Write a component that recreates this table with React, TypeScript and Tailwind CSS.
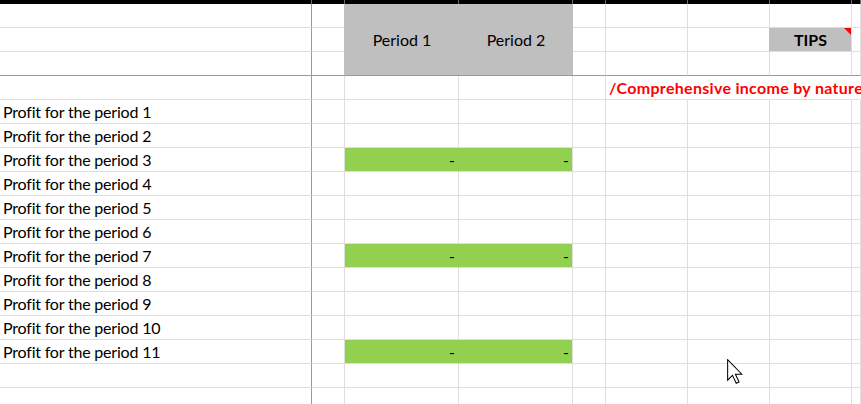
const ROWS = 17;
const COLS = 9;
const GREEN_ROWS = [6, 10, 14];

// grid line colours
// light: #dedede, freeze pane: #9a9a9a

function Cell({ r, c }: { r: number; c: number }) {
  const green = GREEN_ROWS.includes(r) && (c === 2 || c === 3);
  const tips = r === 1 && c === 7;

  const cls = ['relative flex h-full min-w-0 items-center border-b border-r leading-[19px]'];

  if (c === 0) cls.push('border-r-[#9a9a9a]');
  else if (c === 1 && r <= 2) cls.push('border-r-[#bfbfbf]');
  else if (c === 6 && r === 1) cls.push('border-r-[#bfbfbf]');
  else if (r === 3 && c >= 5) cls.push('border-r-transparent');
  else if (green && c === 2) cls.push('border-r-[#92d050]');
  else cls.push('border-r-[#dedede]');

  if (r === 2) cls.push('border-b-[#9a9a9a]');
  else cls.push('border-b-[#dedede]');

  if (green) cls.push('bg-[#92d050] justify-end pr-[3px]');
  if (tips) cls.push('bg-[#bfbfbf] justify-center font-bold');

  let content: React.ReactNode = null;
  if (c === 0 && r >= 4 && r <= 14) {
    content = (
      <span className="whitespace-nowrap pl-[3px] tracking-[-0.2px]">Profit for the period {r - 3}</span>
    );
  } else if (c === 5 && r === 3) {
    content = (
      <span className="whitespace-nowrap pl-[3px] font-bold tracking-[0.3px] text-[#ff0000]">
        /Comprehensive income by nature
      </span>
    );
  } else if (green) {
    content = '-';
  } else if (tips) {
    content = (
      <>
        TIPS
        <span className="absolute right-0 top-0 h-0 w-0 border-l-[7px] border-t-[7px] border-l-transparent border-t-[#ff0000]" />
      </>
    );
  }

  return <div className={cls.join(' ')}>{content}</div>;
}

function Cursor() {
  return (
    <svg
      className="absolute left-[727px] top-[359px]"
      width="16"
      height="25"
      viewBox="0 0 12.5 19.5"
    >
      <path
        d="M0.5 0.5 L0.5 16.5 L4.3 12.7 L7.2 18.9 L9.4 17.9 L6.6 11.9 L11.6 11.9 Z"
        fill="white"
        stroke="black"
        strokeWidth="0.8"
      />
    </svg>
  );
}

export default function App() {
  const cells: React.ReactNode[] = [];
  for (let r = 0; r < ROWS; r++) {
    for (let c = 0; c < COLS; c++) {
      if (r <= 2 && (c === 2 || c === 3)) continue;
      cells.push(<Cell key={`${r}-${c}`} r={r} c={c} />);
    }
  }

  return (
    <div className="relative h-[404px] w-[861px] overflow-hidden bg-white font-['Lato',sans-serif] text-[16px] text-black">
      <div className="grid grid-cols-[312px_33px_114px_114px_33px_82px_82px_82px_1fr] grid-rows-[4px_repeat(17,24px)]">
        {/* top edge of the sheet */}
        {Array.from({ length: COLS }).map((_, i) => (
          <div key={i} className="border-r border-r-[#6a6a6a] bg-black" />
        ))}

        {/* merged header */}
        <div className="col-span-2 col-start-3 row-span-3 row-start-2 flex border-b border-b-[#9a9a9a] bg-[#bfbfbf]">
          <div className="flex flex-1 items-center justify-center leading-[19px]">Period 1</div>
          <div className="flex flex-1 items-center justify-center leading-[19px]">Period 2</div>
        </div>

        {cells}
      </div>
      <Cursor />
    </div>
  );
}
